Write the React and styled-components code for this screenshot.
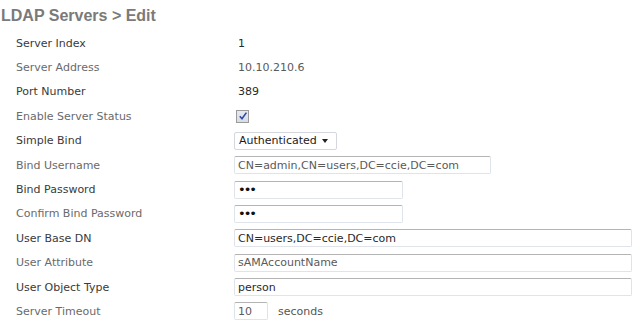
import React from "react";
import styled, { createGlobalStyle } from "styled-components";

const GlobalStyle = createGlobalStyle`
  html, body {
    margin: 0;
    padding: 0;
    background: #ffffff;
  }
  body {
    font-family: "DejaVu Sans", Verdana, sans-serif;
    font-size: 11px;
  }
`;

export const Page = styled.div`
  width: 640px;
  height: 332px;
  overflow: hidden;
  background: #fff;
`;

export const Title = styled.h1`
  margin: 0;
  height: 31px;
  padding: 1px 0 0 1px;
  box-sizing: border-box;
  line-height: 30px;
  font-family: "Liberation Sans", Arial, sans-serif;
  font-size: 16px;
  font-weight: bold;
  color: #7a7a7a;
`;

export const Form = styled.div`
  display: grid;
  grid-template-columns: 218px 1fr;
  grid-auto-rows: 24.4px;
  padding-left: 16px;
  padding-right: 8px;
`;

export const Label = styled.div`
  display: flex;
  align-items: center;
  color: ${(p) => (p.$muted ? "#6a6a6a" : "#3a3a3a")};
`;

export const Value = styled.div`
  display: flex;
  align-items: center;
  gap: 10px;
  color: ${(p) => (p.$muted ? "#5a5a5a" : "#2a2a2a")};
`;

export const Static = styled.span`
  padding-left: 4px;
`;

export const Input = styled.div`
  box-sizing: border-box;
  width: ${(p) => p.$w}px;
  height: 18px;
  display: flex;
  align-items: center;
  padding-left: 3px;
  border: 1px solid #dfe3ea;
  border-top-color: #b4b4b4;
  border-radius: 2px;
  background: #fff;
  white-space: nowrap;
  color: inherit;
`;

export const Dots = styled.span`
  font-size: 13px;
  letter-spacing: -2px;
  color: #111;
`;

export const Check = styled.span`
  box-sizing: border-box;
  width: 13px;
  height: 13px;
  margin-left: 2px;
  border: 1px solid #9a9a9a;
  background: linear-gradient(#e6e9ee, #d8dde6);
  display: flex;
  align-items: center;
  justify-content: center;
`;

export const Select = styled.div`
  box-sizing: border-box;
  width: 103px;
  height: 18px;
  display: flex;
  align-items: center;
  justify-content: space-between;
  padding: 0 8px 0 4px;
  border: 1px solid #d4d8de;
  border-radius: 2px;
  color: #1a1a1a;
`;

export const Arrow = styled.span`
  width: 0;
  height: 0;
  border-left: 3.5px solid transparent;
  border-right: 3.5px solid transparent;
  border-top: 4px solid #222;
  margin-top: 1px;
`;

export const Unit = styled.span`
  color: #555;
`;

const rows = [
  { label: "Server Index", value: <Static>1</Static> },
  { label: "Server Address", value: <Static>10.10.210.6</Static> },
  { label: "Port Number", value: <Static>389</Static> },
  {
    label: "Enable Server Status",
    value: (
      <Check>
        <svg width="10" height="10" viewBox="0 0 10 10">
          <path d="M1.8 5.2 L4 7.8 L8.4 1.6" stroke="#2c4aa6" strokeWidth="1.6" fill="none" />
        </svg>
      </Check>
    ),
  },
  {
    label: "Simple Bind",
    value: (
      <Select>
        Authenticated
        <Arrow />
      </Select>
    ),
  },
  { label: "Bind Username", value: <Input $w={257}>CN=admin,CN=users,DC=ccie,DC=com</Input> },
  { label: "Bind Password", value: <Input $w={169}><Dots>•••</Dots></Input> },
  { label: "Confirm Bind Password", value: <Input $w={169}><Dots>•••</Dots></Input> },
  { label: "User Base DN", value: <Input $w={398}>CN=users,DC=ccie,DC=com</Input> },
  { label: "User Attribute", value: <Input $w={398}>sAMAccountName</Input> },
  { label: "User Object Type", value: <Input $w={398}>person</Input> },
  {
    label: "Server Timeout",
    value: (
      <>
        <Input $w={34}>10</Input>
        <Unit>seconds</Unit>
      </>
    ),
  },
];

const App = () => {
  return (
    <Page>
      <GlobalStyle />
      <Title>LDAP Servers &gt; Edit</Title>
      <Form>
        {rows.map((r, i) => (
          <React.Fragment key={r.label}>
            <Label $muted={i % 2 === 1}>{r.label}</Label>
            <Value $muted={i % 2 === 1}>{r.value}</Value>
          </React.Fragment>
        ))}
      </Form>
    </Page>
  );
};

export default App;
